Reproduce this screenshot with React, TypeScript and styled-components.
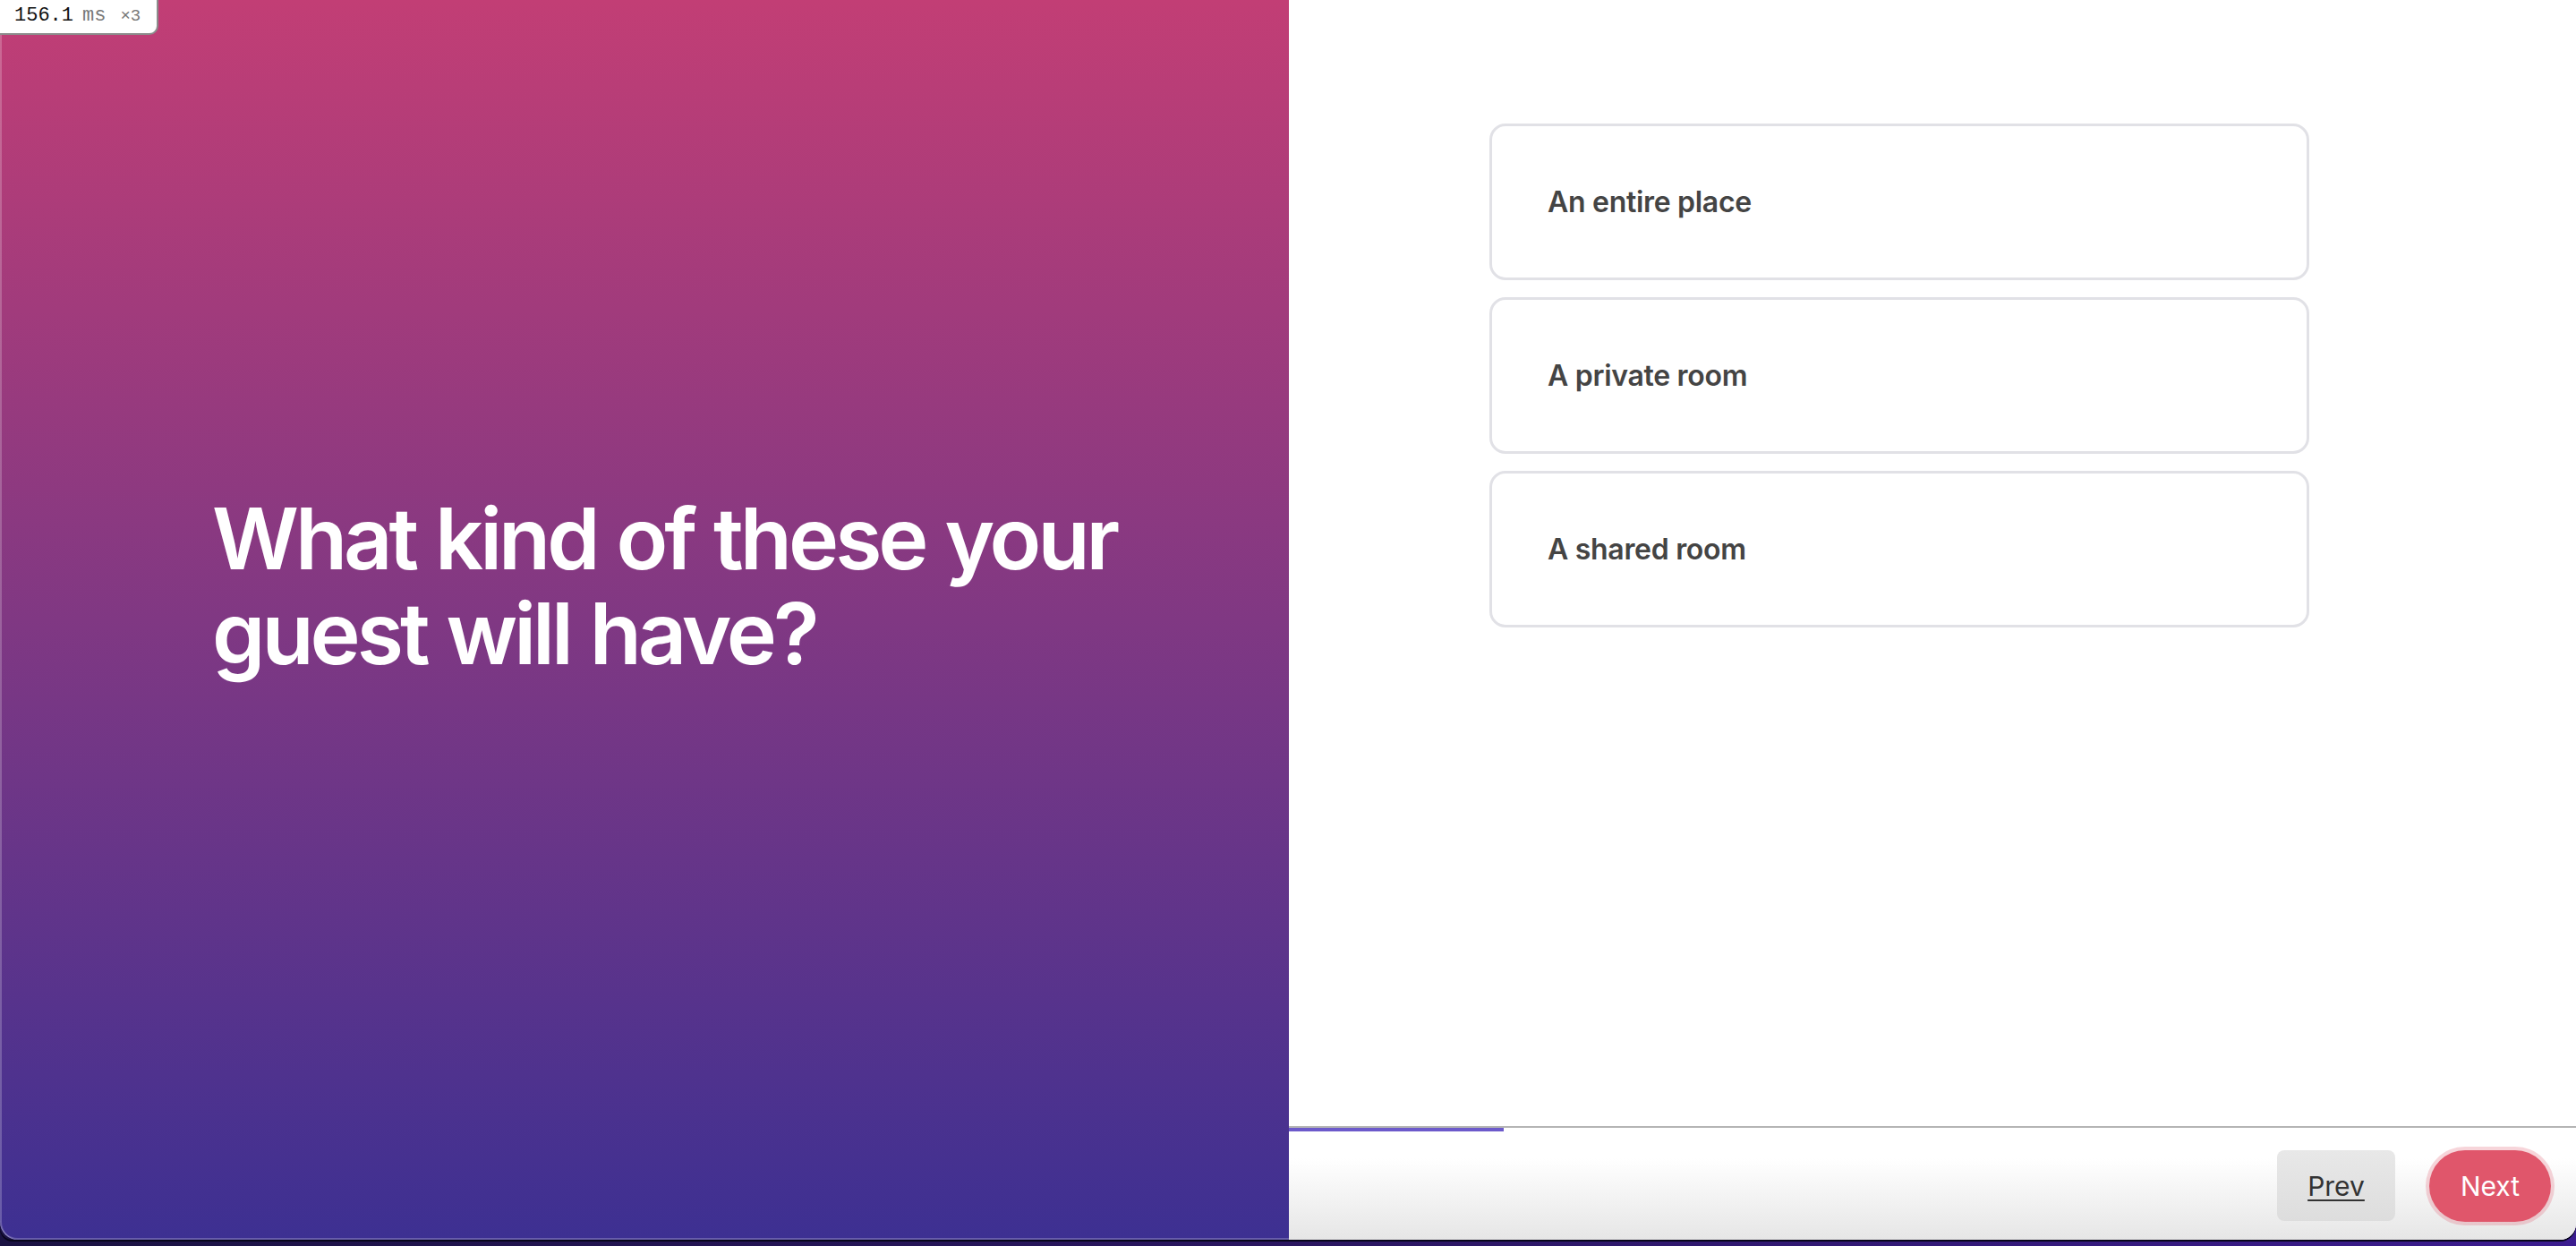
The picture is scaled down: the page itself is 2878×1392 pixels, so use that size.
import { memo } from 'react';
import styled, { createGlobalStyle } from 'styled-components';

const GlobalStyle = createGlobalStyle`
  html, body {
    margin: 0;
    padding: 0;
  }
  body {
    height: 1392px;
    overflow: hidden;
    background: linear-gradient(to right, #1a1242 0%, #2a1660 50%, #3b1c8f 100%);
    font-family: Inter, "Noto Sans", sans-serif;
  }
`;

const Window = styled.div`
  display: flex;
  height: 1385px;
  border-radius: 0 0 18px 14px;
  overflow: hidden;
  box-shadow: 0 2px 0 #07051a;
`;

const Hero = styled.section`
  width: 1440px;
  flex: none;
  display: flex;
  flex-direction: column;
  justify-content: center;
  box-sizing: border-box;
  padding: 0 0 76px 237px;
  background: linear-gradient(to bottom, #c23e75 0%, #803883 50%, #3d3092 100%);
  box-shadow: inset 2px 0 0 rgba(255, 255, 255, 0.22), inset 0 -2px 0 rgba(255, 255, 255, 0.22);
  border-bottom-left-radius: 20px;
`;

const Title = styled.h1`
  margin: 0;
  max-width: 1060px;
  color: #fff;
  font-family: Inter, "Noto Sans", sans-serif;
  font-weight: 600;
  font-size: 95px;
  line-height: 106px;
  letter-spacing: -4px;
  word-spacing: 2px;
`;

const Panel = styled.section`
  flex: 1;
  display: flex;
  flex-direction: column;
  background: #fff;
`;

const Options = styled.div`
  flex: 1;
  display: flex;
  flex-direction: column;
  gap: 19px;
  padding: 138px 0 0 224px;
`;

const Option = styled.button<{ $selected?: boolean }>`
  width: 916px;
  height: 175px;
  box-sizing: border-box;
  display: flex;
  align-items: center;
  padding: 0 0 0 62px;
  background: #fff;
  border: 3px solid ${(p) => (p.$selected ? '#e0566b' : '#e1e1e6')};
  border-radius: 18px;
  color: #444;
  font-family: Inter, "Noto Sans", sans-serif;
  font-weight: 600;
  font-size: 32px;
  letter-spacing: -0.3px;
  text-align: left;
  cursor: pointer;
`;

const Track = styled.div`
  height: 4px;
  border-top: 2px solid #b5b5b5;
`;

const Fill = styled.div`
  height: 4px;
  background: #6c5acb;
`;

const Footer = styled.footer`
  height: 121px;
  display: flex;
  align-items: center;
  justify-content: flex-end;
  gap: 38px;
  padding-right: 28px;
  background: linear-gradient(to bottom, #fff 25%, #e6e6e6 100%);
`;

const PrevButton = styled.button`
  width: 132px;
  height: 79px;
  border: none;
  border-radius: 8px;
  background: linear-gradient(to bottom, #e8e8e8, #dddddd);
  color: #333;
  font-family: Inter, "Noto Sans", sans-serif;
  font-size: 30px;
  text-decoration: underline;
  text-underline-offset: 4px;
  text-decoration-thickness: 2px;
  cursor: pointer;
`;

const NextButton = styled.button`
  width: 136px;
  height: 80px;
  border: none;
  border-radius: 40px;
  background: #e0566b;
  box-shadow: 0 0 0 4px rgba(224, 86, 107, 0.25);
  color: #fff;
  font-family: Inter, "Noto Sans", sans-serif;
  font-size: 30px;
  cursor: pointer;
`;

const Timer = styled.div`
  position: fixed;
  top: 0;
  left: 0;
  display: flex;
  align-items: baseline;
  gap: 10px;
  height: 39px;
  box-sizing: border-box;
  padding: 5px 18px 0 16px;
  background: #fff;
  border-right: 2px solid #8c8c8c;
  border-bottom: 2px solid #8c8c8c;
  border-bottom-right-radius: 10px;
  font-family: "Liberation Mono", "DejaVu Sans Mono", monospace;
  font-size: 22px;
  color: #111;
`;

const Unit = styled.span<{ $small?: boolean }>`
  color: #777;
  font-size: ${(p) => (p.$small ? '19px' : '22px')};
  margin-left: ${(p) => (p.$small ? '6px' : '0')};
`;

const options = ['An entire place', 'A private room', 'A shared room'];

const step = 1;
const total = 6;

const App = () => (
  <>
    <GlobalStyle />
    <Window>
      <Hero>
        <Title>What kind of these your guest will have?</Title>
      </Hero>
      <Panel>
        <Options>
          {options.map((o) => (
            <Option key={o}>{o}</Option>
          ))}
        </Options>
        <Track>
          <Fill style={{ width: `${(step / total) * 100}%` }} />
        </Track>
        <Footer>
          <PrevButton>Prev</PrevButton>
          <NextButton>Next</NextButton>
        </Footer>
      </Panel>
    </Window>
    <Timer>
      156.1
      <Unit>ms</Unit>
      <Unit $small>×3</Unit>
    </Timer>
  </>
);

export default memo(App);
